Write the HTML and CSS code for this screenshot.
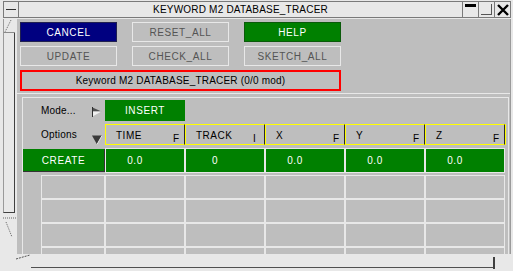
FILE: index.html
```html
<!DOCTYPE html>
<html>
<head>
<meta charset="utf-8">
<title>KEYWORD M2 DATABASE_TRACER</title>
<link rel="stylesheet" href="styles.css">
</head>
<body>
<div class="win">
  <div class="titlebar">
    <div class="tb-box menu"><span class="dash"></span></div>
    <div class="tb-box title">KEYWORD M2 DATABASE_TRACER</div>
    <div class="tb-box min"><span class="bar"></span></div>
    <div class="tb-box max"><span class="sq"></span></div>
    <div class="tb-box close">
      <svg width="12" height="12" viewBox="0 0 12 12"><path d="M1 1L11 11M11 1L1 11" stroke="#000" stroke-width="2.4" fill="none"/></svg>
    </div>
  </div>

  <div class="lframe">
    <div class="lf-top">
      <svg width="12" height="14" viewBox="0 0 12 14"><path d="M7 1L1 13" stroke="#666" stroke-width="1" stroke-dasharray="1 1" fill="none"/></svg>
    </div>
    <div class="lf-mid"></div>
    <div class="lf-low">
      <svg width="14" height="40" viewBox="0 0 14 40"><path d="M0 5H13M3 9L9 24" stroke="#666" stroke-width="1" stroke-dasharray="1 1" fill="none"/></svg>
    </div>
  </div>

  <div class="panel">
    <div class="btns">
      <div class="btn navy">CANCEL</div>
      <div class="btn off">RESET_ALL</div>
      <div class="btn green">HELP</div>
      <div class="btn off">UPDATE</div>
      <div class="btn off">CHECK_ALL</div>
      <div class="btn off">SKETCH_ALL</div>
    </div>
    <div class="status">Keyword M2 DATABASE_TRACER (0/0 mod)</div>
    <div class="sep"></div>

    <div class="table">
      <div class="row mode-row">
        <div class="lbl">Mode...
          <svg class="ico ico-mode" width="10" height="10" viewBox="0 0 10 10">
            <path d="M0.5 0.5L9.5 4.5H0.5Z" fill="#505050"/>
            <path d="M0.5 4.5H9.5L0.5 9.5Z" fill="#f0f0f0"/>
            <path d="M0.5 0V10" stroke="#303030" stroke-width="1"/>
          </svg>
        </div>
        <div class="insert">INSERT</div>
      </div>

      <div class="row opt-row">
        <div class="lbl">Options
          <svg class="ico ico-opt" width="10" height="10" viewBox="0 0 10 10">
            <path d="M0 0.5H10L5 9.5Z" fill="#3a3a3a"/>
            <path d="M10 0.5L5 9.5" stroke="#e8e8e8" stroke-width="1"/>
          </svg>
        </div>
        <div class="heads">
          <div class="head"><span class="h-name">TIME</span><span class="h-type">F</span></div>
          <div class="head"><span class="h-name">TRACK</span><span class="h-type">I</span></div>
          <div class="head"><span class="h-name">X</span><span class="h-type">F</span></div>
          <div class="head"><span class="h-name">Y</span><span class="h-type">F</span></div>
          <div class="head"><span class="h-name">Z</span><span class="h-type">F</span></div>
        </div>
      </div>

      <div class="row data-row">
        <div class="lbl"><div class="create">CREATE</div></div>
        <div class="cell">0.0</div>
        <div class="cell">0</div>
        <div class="cell">0.0</div>
        <div class="cell">0.0</div>
        <div class="cell">0.0</div>
      </div>

      <div class="empty">
        <div class="erow"><div class="ecell first"></div><div class="ecell"></div><div class="ecell"></div><div class="ecell"></div><div class="ecell"></div><div class="ecell"></div></div>
        <div class="erow"><div class="ecell first"></div><div class="ecell"></div><div class="ecell"></div><div class="ecell"></div><div class="ecell"></div><div class="ecell"></div></div>
        <div class="erow"><div class="ecell first"></div><div class="ecell"></div><div class="ecell"></div><div class="ecell"></div><div class="ecell"></div><div class="ecell"></div></div>
        <div class="erow"><div class="ecell first"></div><div class="ecell"></div><div class="ecell"></div><div class="ecell"></div><div class="ecell"></div><div class="ecell"></div></div>
      </div>
    </div>
  </div>

  <div class="rframe"></div>

  <div class="bframe">
    <svg class="bcorner" width="31" height="17" viewBox="0 0 31 17"><path d="M16 5L30 1" stroke="#555" stroke-width="1" stroke-dasharray="2 1" fill="none"/></svg>
    <div class="bline"></div>
    <div class="bend"></div>
  </div>
</div>
</body>
</html>
```

FILE: styles.css
```css
body {
    margin: 0;
    background: #e8e8e8;
    font-family: "Liberation Sans", Arial, sans-serif;
    font-size: 10px;
    letter-spacing: 0.2px;
}

.win {
    width: 513px;
    height: 271px;
    display: grid;
    grid-template-columns: 17px 493px 3px;
    grid-template-rows: 19px 235px 17px;
    overflow: hidden;
}

/* title bar */
.titlebar {
    grid-column: 1 / -1;
    display: flex;
    padding: 1px 2px 0 3px;
}
.tb-box {
    height: 17px;
    box-sizing: border-box;
    border: 1px solid #7a7a7a;
    display: flex;
    align-items: center;
    justify-content: center;
}
.menu { width: 16px; }
.dash { width: 10px; height: 1px; background: #333; }
.title { flex: 1; border-left: none; color: #000; }
.min, .max, .close { width: 16px; border-left: none; }
.min { align-items: flex-start; }
.bar { width: 11px; height: 3px; background: #000; margin-top: 2px; }
.sq {
    width: 11px;
    height: 11px;
    box-sizing: border-box;
    border-right: 1px solid #555;
    border-bottom: 1px solid #555;
    margin: 0 0 1px 0;
}

/* side frames */
.lframe {
    grid-column: 1;
    grid-row: 2;
    padding-left: 3px;
    display: flex;
    flex-direction: column;
}
.lf-top {
    width: 12px;
    height: 14px;
    box-sizing: border-box;
    border-left: 1px solid #9a9a9a;
    border-bottom: 1px solid #8a8a8a;
}
.lf-top svg { display: block; }
.lf-mid {
    width: 12px;
    height: 180px;
    box-sizing: border-box;
    border-left: 1px solid #9a9a9a;
    border-right: 1px solid #404040;
    border-bottom: 1px solid #404040;
}
.lf-low { flex: 1; }
.lf-low svg { display: block; }

.rframe {
    grid-column: 3;
    grid-row: 2;
    border-left: 1px solid #9a9a9a;
}

.bframe {
    grid-column: 1 / -1;
    grid-row: 3;
    display: flex;
    align-items: flex-start;
}
.bcorner { display: block; }
.bline {
    width: 462px;
    height: 13px;
    border-bottom: 1px solid #505050;
}
.bend {
    width: 2px;
    height: 12px;
    margin-top: 3px;
    background: #404040;
}

/* main panel */
.panel {
    grid-column: 2;
    grid-row: 2;
    background: #bebebe;
    padding: 3px 0 0 3px;
    overflow: hidden;
    display: flex;
    flex-direction: column;
}
.panel > * { flex-shrink: 0; }

.btns {
    display: grid;
    grid-template-columns: repeat(3, 97px);
    grid-auto-rows: 20px;
    column-gap: 15px;
    row-gap: 4px;
}
.btn {
    box-sizing: border-box;
    display: flex;
    align-items: center;
    justify-content: center;
    font-size: 10px;
    letter-spacing: 0.6px;
}
.btn.off {
    border: 1px solid #e8e8e8;
    color: #545454;
}
.btn.navy {
    background: #000080;
    border: 1px solid #202050;
    color: #fff;
}
.btn.green {
    background: #008000;
    border: 1px solid #0a5a0a;
    color: #fff;
}

.status {
    width: 321px;
    height: 21px;
    margin-top: 4px;
    box-sizing: border-box;
    border: 2px solid #ff0000;
    display: flex;
    align-items: center;
    justify-content: center;
    color: #000;
}

.sep {
    margin: 2px 0 0 -3px;
    height: 1px;
    background: #e8e8e8;
}

/* table area */
.panel > .table {
    margin: 3px 0 0 2px;
    width: 487px;
    flex: 1 1 0;
    min-height: 0;
    overflow: hidden;
    box-sizing: border-box;
    border: 1px solid #e8e8e8;
    border-bottom: none;
}
.row { display: flex; }
.lbl {
    width: 82px;
    box-sizing: border-box;
    padding: 0 3px 0 18px;
    display: flex;
    align-items: center;
    color: #000;
}
.ico { margin-left: auto; display: block; }
.ico-mode { align-self: flex-start; margin-top: 7px; }
.ico-opt { align-self: flex-start; margin-top: 11px; }

.mode-row { margin-top: 2px; height: 21px; }
.insert {
    width: 80px;
    background: #008000;
    color: #fff;
    display: flex;
    align-items: center;
    justify-content: center;
    letter-spacing: 0.6px;
}

.opt-row { margin-top: 3px; height: 21px; }
.heads {
    display: flex;
    border-right: 1px solid #ffff00;
}
.head {
    position: relative;
    width: 80px;
    height: 21px;
    box-sizing: border-box;
    border: 1px solid #ffff00;
    border-right-color: #2a2a2a;
    padding: 5px 0 0 10px;
    line-height: 12px;
    color: #000;
    letter-spacing: 0.5px;
}
.h-type {
    position: absolute;
    left: 67px;
    top: 8px;
}

.data-row { margin-top: 3px; height: 25px; }
.data-row .lbl { padding: 0; align-items: flex-start; }
.create {
    width: 82px;
    height: 23px;
    margin-top: 1px;
    box-sizing: border-box;
    background: #008000;
    border-right: 1px solid #333;
    border-bottom: 1px solid #333;
    color: #fff;
    display: flex;
    align-items: center;
    justify-content: center;
    letter-spacing: 0.6px;
}
.cell {
    width: 80px;
    height: 25px;
    box-sizing: border-box;
    border: 1px solid #e8e8e8;
    background: #008000;
    color: #fff;
    padding-right: 20px;
    display: flex;
    align-items: center;
    justify-content: center;
    letter-spacing: 0.5px;
}

.empty { margin-top: 2px; }
.erow { display: flex; height: 24px; }
.ecell {
    width: 80px;
    box-sizing: border-box;
    border: 1px solid #e8e8e8;
}
.ecell.first {
    width: 64px;
    margin-left: 18px;
}
```
